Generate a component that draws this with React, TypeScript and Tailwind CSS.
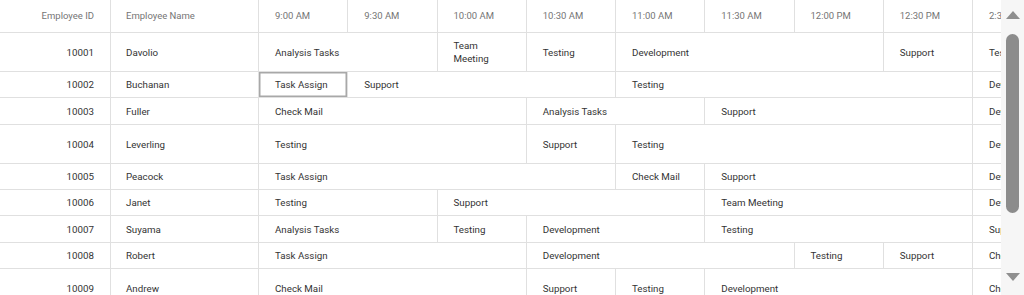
import React from "react";

type Cell = { t: string; s: number; focus?: boolean };
type Row = { id: number; name: string; h: string; cells: Cell[] };

const SPAN: Record<number, string> = {
  1: "col-span-1",
  2: "col-span-2",
  3: "col-span-3",
  4: "col-span-4",
};

const c = (t: string, s: number, focus?: boolean): Cell => ({ t, s, focus });

const rows: Row[] = [
  { id: 10001, name: "Davolio", h: "h-[39px]", cells: [c("Analysis Tasks", 2), c("Team Meeting", 1), c("Testing", 1), c("Development", 3), c("Support", 1), c("Testing", 1)] },
  { id: 10002, name: "Buchanan", h: "h-[26px]", cells: [c("Task Assign", 1, true), c("Support", 3), c("Testing", 4), c("Development", 1)] },
  { id: 10003, name: "Fuller", h: "h-[27px]", cells: [c("Check Mail", 3), c("Analysis Tasks", 2), c("Support", 3), c("Development", 1)] },
  { id: 10004, name: "Leverling", h: "h-[39px]", cells: [c("Testing", 3), c("Support", 1), c("Testing", 4), c("Development", 1)] },
  { id: 10005, name: "Peacock", h: "h-[26px]", cells: [c("Task Assign", 4), c("Check Mail", 1), c("Support", 3), c("Development", 1)] },
  { id: 10006, name: "Janet", h: "h-[26px]", cells: [c("Testing", 2), c("Support", 3), c("Team Meeting", 3), c("Development", 1)] },
  { id: 10007, name: "Suyama", h: "h-[27px]", cells: [c("Analysis Tasks", 2), c("Testing", 1), c("Development", 2), c("Testing", 3), c("Support", 1)] },
  { id: 10008, name: "Robert", h: "h-[26px]", cells: [c("Task Assign", 3), c("Development", 3), c("Testing", 1), c("Support", 1), c("Check Mail", 1)] },
  { id: 10009, name: "Andrew", h: "h-[39px]", cells: [c("Check Mail", 3), c("Support", 1), c("Testing", 1), c("Development", 3), c("Check Mail", 1)] },
];

const times = ["9:00 AM", "9:30 AM", "10:00 AM", "10:30 AM", "11:00 AM", "11:30 AM", "12:00 PM", "12:30 PM", "2:30 PM", "3:00 PM"];

const GRID = "grid grid-cols-[111px_148px_repeat(10,89.25px)]";

export default function App() {
  return (
    <div className="w-[1024px] h-[295px] overflow-hidden bg-white flex font-['Roboto',sans-serif]">
      <div className="w-[1001px] overflow-hidden flex flex-col">
        {/* Header */}
        <div className={`${GRID} h-[33px] border-b border-[#e0e0e0] text-[9.5px] text-[#757575] shrink-0`}>
          <div className="border-r border-[#e0e0e0] pr-4 flex items-center justify-end whitespace-nowrap">Employee ID</div>
          <div className="border-r border-[#e0e0e0] pl-[15px] flex items-center whitespace-nowrap">Employee Name</div>
          {times.map((t) => (
            <div key={t} className="border-r border-[#e0e0e0] pl-4 flex items-center whitespace-nowrap">
              {t}
            </div>
          ))}
        </div>
        {/* Rows */}
        {rows.map((r) => (
          <div key={r.id} className={`${GRID} ${r.h} border-b border-[#e0e0e0] text-[9.75px] leading-[13px] text-[#333333] shrink-0`}>
            <div className="border-r border-[#e0e0e0] pr-4 flex items-center justify-end">{r.id}</div>
            <div className="border-r border-[#e0e0e0] pl-[15px] flex items-center">{r.name}</div>
            {r.cells.map((cell, i) => (
              <div
                key={i}
                className={`${SPAN[cell.s]} border-r border-[#e0e0e0] px-4 flex items-center ${cell.focus ? "shadow-[inset_0_0_0_1.5px_#a8a8a8]" : ""}`}
              >
                {cell.t}
              </div>
            ))}
          </div>
        ))}
      </div>
      {/* Scrollbar */}
      <div className="w-[23px] h-full bg-[#f6f6f6] flex flex-col items-center relative">
        <svg className="absolute left-[5px] top-[11px]" width="14" height="8" viewBox="0 0 14 8">
          <polygon points="7,0 14,8 0,8" fill="#8f8f8f" />
        </svg>
        <div className="absolute left-[5px] top-[34px] w-[13px] h-[179px] rounded-full bg-[#8c8c8c]" />
        <svg className="absolute left-[5px] top-[273px]" width="14" height="8" viewBox="0 0 14 8">
          <polygon points="0,0 14,0 7,8" fill="#8f8f8f" />
        </svg>
      </div>
    </div>
  );
}
